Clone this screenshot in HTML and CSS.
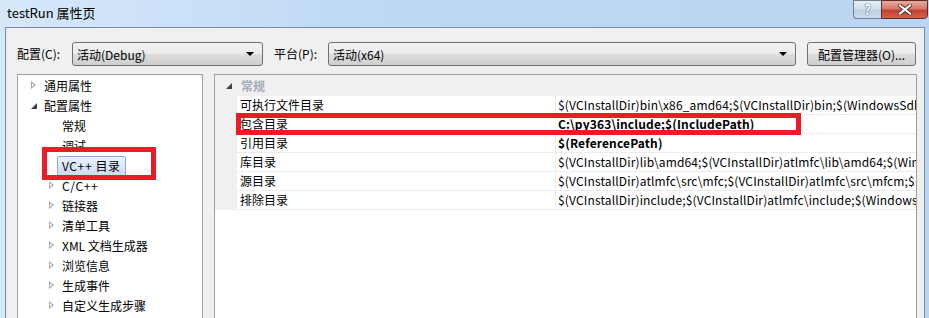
FILE: index.html
```html
<!DOCTYPE html>
<html>
<head>
    <title>testRun 属性页</title>
    <link rel="stylesheet" href="styles.css">
</head>
<body>
    <div class="window">
        <div class="titlebar">
            <span class="title">testRun 属性页</span>
            <div class="caption-buttons">
                <div class="btn-help">?</div>
                <div class="btn-close">
                    <svg width="14" height="11" viewBox="0 0 14 11">
                        <path d="M2 1.5 L12 9.5 M12 1.5 L2 9.5" stroke="#5a2a24" stroke-width="4" stroke-linecap="square"/>
                        <path d="M2 1.5 L12 9.5 M12 1.5 L2 9.5" stroke="#ffffff" stroke-width="2.2" stroke-linecap="square"/>
                    </svg>
                </div>
            </div>
        </div>

        <div class="client">
            <div class="toolbar">
                <label class="label label-config">配置(C):</label>
                <div class="combo combo-config">
                    <span>活动(Debug)</span>
                    <span class="combo-arrow"></span>
                </div>
                <label class="label label-platform">平台(P):</label>
                <div class="combo combo-platform">
                    <span>活动(x64)</span>
                    <span class="combo-arrow"></span>
                </div>
                <button class="btn-manager">配置管理器(O)...</button>
            </div>

            <div class="panes">
                <div class="tree">
                    <div class="node level0"><span class="arrow collapsed"></span><span class="text">通用属性</span></div>
                    <div class="node level0"><span class="arrow expanded"></span><span class="text">配置属性</span></div>
                    <div class="node level1"><span class="arrow"></span><span class="text">常规</span></div>
                    <div class="node level1"><span class="arrow"></span><span class="text">调试</span></div>
                    <div class="node level1"><span class="arrow"></span><span class="text latin selected">VC++ 目录</span></div>
                    <div class="node level1"><span class="arrow collapsed"></span><span class="text latin">C/C++</span></div>
                    <div class="node level1"><span class="arrow collapsed"></span><span class="text">链接器</span></div>
                    <div class="node level1"><span class="arrow collapsed"></span><span class="text">清单工具</span></div>
                    <div class="node level1"><span class="arrow collapsed"></span><span class="text">XML 文档生成器</span></div>
                    <div class="node level1"><span class="arrow collapsed"></span><span class="text">浏览信息</span></div>
                    <div class="node level1"><span class="arrow collapsed"></span><span class="text">生成事件</span></div>
                    <div class="node level1"><span class="arrow collapsed"></span><span class="text">自定义生成步骤</span></div>
                    <div class="mark mark-tree"></div>
                </div>

                <div class="grid">
                    <div class="grid-header">
                        <span class="arrow expanded"></span>
                        <span class="category">常规</span>
                    </div>
                    <div class="row">
                        <div class="gutter"></div>
                        <div class="cell name">可执行文件目录</div>
                        <div class="cell value">$(VCInstallDir)bin\x86_amd64;$(VCInstallDir)bin;$(WindowsSdkDir)bin\NETFX 4.0 Tools;$(WindowsSdkDir)bin\x64</div>
                    </div>
                    <div class="row">
                        <div class="gutter"></div>
                        <div class="cell name">包含目录</div>
                        <div class="cell value bold">C:\py363\include;$(IncludePath)</div>
                    </div>
                    <div class="row">
                        <div class="gutter"></div>
                        <div class="cell name">引用目录</div>
                        <div class="cell value bold">$(ReferencePath)</div>
                    </div>
                    <div class="row">
                        <div class="gutter"></div>
                        <div class="cell name">库目录</div>
                        <div class="cell value">$(VCInstallDir)lib\amd64;$(VCInstallDir)atlmfc\lib\amd64;$(WindowsSdkDir)lib\x64</div>
                    </div>
                    <div class="row">
                        <div class="gutter"></div>
                        <div class="cell name">源目录</div>
                        <div class="cell value">$(VCInstallDir)atlmfc\src\mfc;$(VCInstallDir)atlmfc\src\mfcm;$(VCInstallDir)atlmfc\src\atl</div>
                    </div>
                    <div class="row">
                        <div class="gutter"></div>
                        <div class="cell name">排除目录</div>
                        <div class="cell value">$(VCInstallDir)include;$(VCInstallDir)atlmfc\include;$(WindowsSdkDir)include</div>
                    </div>
                    <div class="mark mark-grid"></div>
                </div>
            </div>
        </div>
    </div>
</body>
</html>
```

FILE: styles.css
```css
* {
    margin: 0;
    padding: 0;
    box-sizing: border-box;
    font-family: "Noto Sans CJK SC", "Liberation Sans", sans-serif;
}

body {
    width: 929px;
    height: 318px;
    overflow: hidden;
    background: #c2dbf4;
    font-size: 12px;
    color: #000;
}

.window {
    width: 929px;
    height: 318px;
    display: flex;
    flex-direction: column;
    background: linear-gradient(90deg, #d6e8fa 0%, #bfd9f4 40%, #b9d5f2 100%);
}

/* title bar */
.titlebar {
    height: 27px;
    display: flex;
    justify-content: space-between;
    align-items: flex-start;
    padding-left: 7px;
}

.title {
    font-size: 13px;
    line-height: 26px;
    color: #000;
}

.caption-buttons {
    display: flex;
    margin-right: 1px;
}

.btn-help {
    width: 28px;
    height: 19px;
    border: 1px solid #6f7f94;
    border-right: none;
    border-radius: 0 0 0 4px;
    background: linear-gradient(180deg, #e6eef7 0%, #d3e0ee 45%, #bccfe4 55%, #cbdcee 100%);
    color: #fff;
    font-size: 14px;
    font-weight: bold;
    text-align: center;
    line-height: 17px;
    text-shadow: 0 0 1px #3a4a60, 0 0 1px #3a4a60;
}

.btn-close {
    width: 47px;
    height: 19px;
    border: 1px solid #5b2a26;
    border-radius: 0 0 4px 0;
    background: linear-gradient(180deg, #e8a99d 0%, #d67a6a 45%, #c2412f 55%, #d2654e 100%);
    display: flex;
    justify-content: center;
    align-items: center;
}

/* client area */
.client {
    flex: 1;
    margin: 0 4px 0 5px;
    border: 1px solid #7b8da4;
    border-bottom: none;
    background: #f0f0f0;
    padding: 14px 0 0 11px;
    display: flex;
    flex-direction: column;
}

.toolbar {
    display: flex;
    align-items: center;
    height: 24px;
}

.label {
    line-height: 24px;
}

.label-config {
    width: 55px;
}

.label-platform {
    width: 54px;
    margin-left: 11px;
}

.combo {
    height: 24px;
    border: 1px solid #707070;
    border-radius: 3px;
    background: linear-gradient(180deg, #f2f2f2 0%, #ebebeb 48%, #dddddd 52%, #cfcfcf 100%);
    display: flex;
    justify-content: space-between;
    align-items: center;
    padding: 0 8px 0 4px;
}

.combo-config {
    width: 191px;
}

.combo-platform {
    width: 468px;
}

.combo-arrow {
    width: 0;
    height: 0;
    border-left: 4px solid transparent;
    border-right: 4px solid transparent;
    border-top: 4px solid #000;
}

.btn-manager {
    margin-left: 11px;
    width: 109px;
    height: 24px;
    border: 1px solid #707070;
    border-radius: 3px;
    background: linear-gradient(180deg, #f2f2f2 0%, #ebebeb 48%, #dddddd 52%, #cfcfcf 100%);
    font-size: 12px;
    color: #000;
}

/* panes */
.panes {
    flex: 1;
    display: flex;
    gap: 11px;
    margin-top: 8px;
}

.tree {
    position: relative;
    width: 186px;
    background: #fff;
    border: 1px solid #a0a0a0;
    border-bottom: none;
    padding-top: 1px;
}

.node {
    height: 20px;
    display: flex;
    align-items: center;
}

.node.level0 {
    padding-left: 11px;
}

.node.level1 {
    padding-left: 29px;
}

.arrow {
    width: 14px;
    height: 20px;
    position: relative;
    flex-shrink: 0;
}

.arrow.collapsed::before {
    content: "";
    position: absolute;
    left: 2px;
    top: 5px;
    border-top: 4.5px solid transparent;
    border-bottom: 4.5px solid transparent;
    border-left: 5px solid #a6a6a6;
}

.arrow.collapsed::after {
    content: "";
    position: absolute;
    left: 3px;
    top: 7px;
    border-top: 2.5px solid transparent;
    border-bottom: 2.5px solid transparent;
    border-left: 2.8px solid #fff;
}

.arrow.expanded::before {
    content: "";
    position: absolute;
    left: 2px;
    top: 7px;
    width: 0;
    height: 0;
    border-left: 6px solid transparent;
    border-bottom: 6px solid #404040;
}

.node .text {
    line-height: 18px;
    padding: 0 1px;
    white-space: nowrap;
}

.node .text.latin {
    letter-spacing: 0.6px;
}

.node .text.selected {
    margin-left: -4px;
    padding: 0 4px;
    height: 20px;
    line-height: 18px;
    border: 1px solid #84acdd;
    border-radius: 2px;
    background: linear-gradient(180deg, #eaf3fd 0%, #d9e8fb 50%, #c9defa 100%);
}

/* property grid */
.grid {
    position: relative;
    width: 703px;
    background: #fff;
    border: 1px solid #a0a0a0;
    border-bottom: none;
}

.grid-header {
    height: 21px;
    display: flex;
    align-items: center;
    background: #f0f0f0;
    padding-left: 9px;
}

.grid-header .arrow {
    width: 17px;
}

.category {
    color: #a3abb8;
    font-weight: bold;
    line-height: 20px;
}

.row {
    height: 19px;
    display: flex;
}

.gutter {
    width: 22px;
    background: #f0f0f0;
}

.cell {
    border-bottom: 1px solid #ececec;
    line-height: 18px;
    white-space: nowrap;
    overflow: hidden;
}

.cell.name {
    width: 319px;
    padding-left: 3px;
    border-right: 1px solid #ececec;
}

.cell.value {
    flex: 1;
    padding-left: 2px;
    letter-spacing: 0.15px;
}

.cell.bold {
    font-weight: bold;
}

/* red annotation boxes drawn over the screenshot */
.mark {
    position: absolute;
    border: 5px solid #ed1c24;
}

.mark-tree {
    left: 24px;
    top: 72px;
    width: 114px;
    height: 33px;
}

.mark-grid {
    left: 21px;
    top: 38px;
    width: 565px;
    height: 22px;
}
```
